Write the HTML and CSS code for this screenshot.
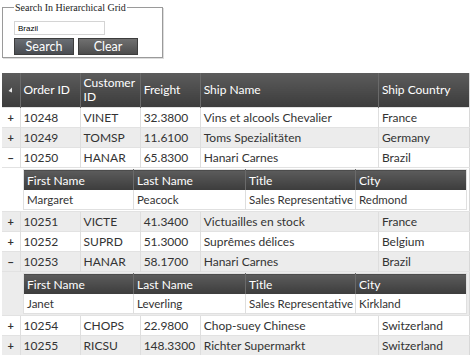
FILE: index.html
```html
<!DOCTYPE html>
<html>
<head>
<meta charset="utf-8">
<link rel="stylesheet" href="styles.css">
</head>
<body>
<fieldset class="search">
  <legend>Search In Hierarchical Grid</legend>
  <input class="search-input" type="text" value="Brazil">
  <div class="buttons">
    <button class="btn btn-search">Search</button>
    <button class="btn btn-clear">Clear</button>
  </div>
</fieldset>

<table class="grid">
  <colgroup>
    <col class="c-exp"><col class="c-id"><col class="c-cust"><col class="c-fr"><col class="c-name"><col class="c-country">
  </colgroup>
  <thead>
    <tr>
      <th class="exp"><svg width="5" height="6" viewBox="0 0 5 6"><path d="M4 0.5 L4 5.5 L0.5 4 Z" fill="#e8e8e8"/></svg></th>
      <th>Order ID</th>
      <th>Customer ID</th>
      <th>Freight</th>
      <th>Ship Name</th>
      <th>Ship Country</th>
    </tr>
  </thead>
  <tbody>
    <tr class="r"><td class="exp">+</td><td>10248</td><td>VINET</td><td>32.3800</td><td>Vins et alcools Chevalier</td><td>France</td></tr>
    <tr class="r alt"><td class="exp">+</td><td>10249</td><td>TOMSP</td><td>11.6100</td><td>Toms Spezialitäten</td><td>Germany</td></tr>
    <tr class="r"><td class="exp minus">−</td><td>10250</td><td>HANAR</td><td>65.8300</td><td>Hanari Carnes</td><td>Brazil</td></tr>
    <tr class="detail"><td class="exp-blank"></td><td colspan="5" class="detail-cell">
      <table class="child">
        <colgroup><col class="cc1"><col class="cc2"><col class="cc3"><col class="cc4"></colgroup>
        <thead><tr><th>First Name</th><th>Last Name</th><th>Title</th><th>City</th></tr></thead>
        <tbody><tr><td>Margaret</td><td>Peacock</td><td>Sales Representative</td><td>Redmond</td></tr></tbody>
      </table>
    </td></tr>
    <tr class="r alt"><td class="exp">+</td><td>10251</td><td>VICTE</td><td>41.3400</td><td>Victuailles en stock</td><td>France</td></tr>
    <tr class="r"><td class="exp">+</td><td>10252</td><td>SUPRD</td><td>51.3000</td><td>Suprêmes délices</td><td>Belgium</td></tr>
    <tr class="r alt"><td class="exp minus">−</td><td>10253</td><td>HANAR</td><td>58.1700</td><td>Hanari Carnes</td><td>Brazil</td></tr>
    <tr class="detail alt"><td class="exp-blank"></td><td colspan="5" class="detail-cell">
      <table class="child">
        <colgroup><col class="cc1"><col class="cc2"><col class="cc3"><col class="cc4"></colgroup>
        <thead><tr><th>First Name</th><th>Last Name</th><th>Title</th><th>City</th></tr></thead>
        <tbody><tr><td>Janet</td><td>Leverling</td><td>Sales Representative</td><td>Kirkland</td></tr></tbody>
      </table>
    </td></tr>
    <tr class="r"><td class="exp">+</td><td>10254</td><td>CHOPS</td><td>22.9800</td><td>Chop-suey Chinese</td><td>Switzerland</td></tr>
    <tr class="r alt"><td class="exp">+</td><td>10255</td><td>RICSU</td><td>148.3300</td><td>Richter Supermarkt</td><td>Switzerland</td></tr>
  </tbody>
</table>
</body>
</html>
```
FILE: styles.css
```css
html, body {
  margin: 0;
  padding: 0;
  background: #fff;
}
body {
  padding: 0 0 0 2px;
  font-family: "Lato", "Open Sans", sans-serif;
}
.search {
  width: 138px;
  margin: 2px 0 0 0;
  padding: 8px 10px 2px 11px;
  border: 1px solid #9a9a9a;
  box-shadow: inset 1px 1px 0 #fff, 1px 1px 0 #ddd;
}
.search legend {
  font-family: "Liberation Serif", serif;
  font-size: 10px;
  padding: 0 1px;
  margin-left: 0;
  color: #222;
}
.search-input {
  display: block;
  box-sizing: border-box;
  width: 91px;
  height: 14px;
  margin: 0 0 3px 0;
  padding: 0 3px;
  border: 1px solid #d4d4d4;
  font-family: "Liberation Sans", Arial, sans-serif;
  font-size: 8px;
  color: #000;
}
.buttons {
  display: flex;
  gap: 4px;
}
.btn {
  box-sizing: border-box;
  width: 60px;
  height: 17px;
  padding: 0;
  border: 1px solid #3d3d3d;
  background: linear-gradient(#707070, #4d4d4d);
  color: #fff;
  font-family: "Lato", sans-serif;
  font-size: 12.5px;
  line-height: 15px;
}
.btn-search {
  background: linear-gradient(#6a6e74, #4a4d52);
}
.grid {
  margin-top: 15px;
  border-collapse: collapse;
  table-layout: fixed;
  width: 468px;
  font-size: 12px;
  color: #333;
  border-right: 1px solid #d8d8d8;
}
.c-exp { width: 18px; }
.c-id { width: 60px; }
.c-cust { width: 60px; }
.c-fr { width: 60px; }
.c-name { width: 178px; }
.c-country { width: 91px; }
.grid > thead th {
  height: 34px;
  padding: 0 3px;
  background: linear-gradient(#5c5c5c, #3c3c3c);
  color: #fff;
  font-weight: normal;
  font-size: 12px;
  text-align: left;
  line-height: 14px;
  border-left: 1px solid #6a6a6a;
}
.grid > thead th:first-child {
  border-left: none;
  text-align: center;
  padding: 0;
}
.grid > thead th svg { display: block; margin: 0 auto; }
.grid > tbody > tr.r > td {
  height: 19px;
  padding: 0 3px;
  border-top: 1px solid #e2e2e2;
  border-left: 1px solid #dedede;
  white-space: nowrap;
  overflow: hidden;
}
.grid > tbody > tr.r > td.exp {
  border-left: none;
  padding: 0;
  text-align: center;
  font-weight: bold;
  font-size: 11px;
  color: #333;
}
.grid tr.alt { background: #ececec; }
.grid > tbody > tr.detail > td {
  border-top: 1px solid #e2e2e2;
}
.exp-blank { padding: 0; }
.detail-cell {
  padding: 1px 3px 1px 3px;
  border-left: none;
}
.child {
  width: 100%;
  border-collapse: collapse;
  table-layout: fixed;
  font-size: 12px;
  color: #333;
  background: #fff;
  border: 1px solid #e0e0e0;
}
.cc1 { width: 110px; }
.cc2 { width: 112px; }
.cc3 { width: 110px; }
.cc4 { width: 111px; }
.child th {
  height: 20px;
  padding: 0 3px;
  background: linear-gradient(#5c5c5c, #3c3c3c);
  color: #fff;
  font-weight: normal;
  font-size: 12px;
  text-align: left;
  border-left: 1px solid #6a6a6a;
  white-space: nowrap;
}
.child th:first-child, .child td:first-child { border-left: none; }
.child td {
  height: 19px;
  padding: 0 3px;
  border-left: 1px solid #dedede;
  white-space: nowrap;
  overflow: hidden;
  font-size: 11.5px;
}
```
